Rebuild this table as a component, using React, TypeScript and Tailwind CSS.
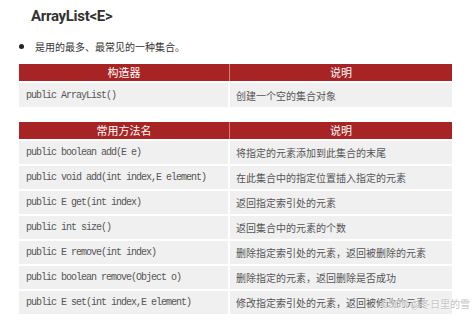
import React from "react";

const cjk = { fontFamily: '"Noto Sans CJK SC", "Noto Sans", sans-serif' };
const mono = { fontFamily: '"Liberation Mono", "Noto Sans CJK SC", monospace' };

function Header({ a, b }: { a: string; b: string }) {
  return (
    <div className="flex h-[17px] bg-[#a82424] text-white text-[11px] leading-[17px]" style={cjk}>
      <div className="w-[211px] text-center border-r border-[#d87a7a]">{a}</div>
      <div className="flex-1 text-center">{b}</div>
    </div>
  );
}

function Row({ code, desc, h }: { code: string; desc: string; h: string }) {
  return (
    <div className={`flex ${h} border-t-2 border-white bg-[#f0f0f0] text-[#555] items-center`}>
      <div className="w-[211px] pl-[7px] text-[10px] tracking-[-1px] whitespace-nowrap border-r-2 border-white h-full flex items-center" style={mono}>
        {code}
      </div>
      <div className="flex-1 pl-[6px] text-[10px] whitespace-nowrap" style={cjk}>
        {desc}
      </div>
    </div>
  );
}

const methods: [string, string][] = [
  ["public boolean add(E e)", "将指定的元素添加到此集合的末尾"],
  ["public void add(int index,E element)", "在此集合中的指定位置插入指定的元素"],
  ["public E get(int index)", "返回指定索引处的元素"],
  ["public int size()", "返回集合中的元素的个数"],
  ["public E remove(int index)", "删除指定索引处的元素，返回被删除的元素"],
  ["public boolean remove(Object o)", "删除指定的元素，返回删除是否成功"],
  ["public E set(int index,E element)", "修改指定索引处的元素，返回被修改的元素"],
];

export default function App() {
  return (
    <div className="relative w-[474px] h-[320px] bg-white overflow-hidden">
      <div className="pl-[31px] pt-[4px] h-[32px] text-[15px] font-bold text-[#333] leading-[24px] tracking-[-0.3px]" style={{ fontFamily: 'Roboto, "Noto Sans", sans-serif' }}>
        ArrayList&lt;E&gt;
      </div>
      <div className="flex items-center h-[28px] pl-[19px]">
        <div className="w-[5px] h-[5px] rounded-full bg-[#222]" />
        <div className="ml-[11px] text-[10px] text-[#333]" style={cjk}>
          是用的最多、最常见的一种集合。
        </div>
      </div>
      <div className="ml-[19px] w-[433px] mt-[4px]">
        <Header a="构造器" b="说明" />
        <Row code="public ArrayList()" desc="创建一个空的集合对象" h="h-[26px]" />
      </div>
      <div className="ml-[19px] w-[433px] mt-[15px]">
        <Header a="常用方法名" b="说明" />
        {methods.map(([c, d]) => (
          <Row key={c} code={c} desc={d} h="h-[25px]" />
        ))}
      </div>
      <div
        className="absolute left-[382px] top-[296px] text-[10px] text-[#c4c4c4] whitespace-nowrap"
        style={{ ...cjk, textShadow: "0 0 2px #fff, 0 0 2px #fff" }}
      >
        CSDN @冬日里的雪
      </div>
    </div>
  );
}
